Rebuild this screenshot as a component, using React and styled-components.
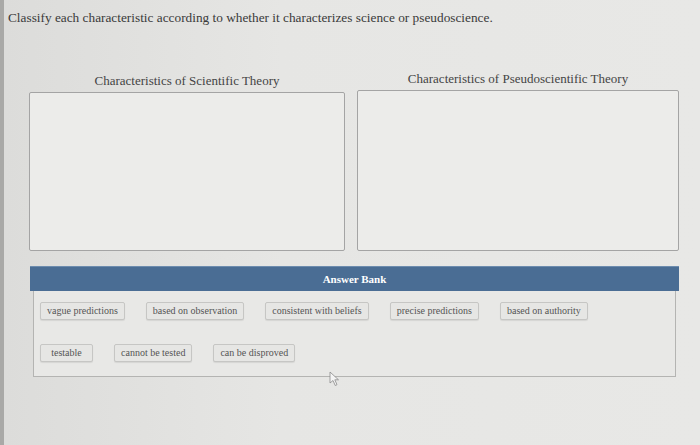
import React from "react";
import styled, { createGlobalStyle } from "styled-components";

const GlobalStyle = createGlobalStyle`
  html, body {
    margin: 0;
    padding: 0;
    background: #e4e4e2;
  }
  body {
    font-family: "Liberation Serif", "Times New Roman", serif;
  }
`;

const Page = styled.div`
  position: relative;
  width: 700px;
  height: 445px;
  box-sizing: border-box;
  border-left: 4px solid #a9a9a7;
  background: linear-gradient(90deg, #dcdcda 0, #e6e6e4 40%, #e8e8e6 100%);
  overflow: hidden;
`;

const Prompt = styled.p`
  margin: 0;
  padding: 10px 0 0 4px;
  font-size: 13.3px;
  color: #3a3a3a;
  line-height: 16px;
`;

const Columns = styled.div`
  display: grid;
  grid-template-columns: 316px 322px;
  column-gap: 12px;
  margin: 47px 0 0 25px;
`;

const Column = styled.div`
  display: flex;
  flex-direction: column;
`;

const ColumnTitle = styled.div`
  text-align: center;
  font-size: 13px;
  color: #444;
  height: 19px;
  line-height: 16px;
  margin-top: ${({ $right }) => ($right ? "-2px" : "0")};
`;

const DropBox = styled.div`
  height: ${({ $right }) => ($right ? "161px" : "159px")};
  box-sizing: border-box;
  border: 1px solid #a4a4a4;
  border-radius: 2px;
  background: #ececea;
`;

const Bank = styled.div`
  margin: 15px 0 0 26px;
  width: 649px;
`;

const BankBar = styled.div`
  height: 25px;
  background: #4a6d94;
  border-top: 1px solid #6d8cae;
  color: #fff;
  font-size: 11px;
  font-weight: bold;
  text-align: center;
  line-height: 25px;
  box-sizing: border-box;
`;

const BankBody = styled.div`
  margin: 0 3px;
  box-sizing: border-box;
  border: 1px solid #b4b4b2;
  border-top: none;
  padding: 11px 0 14px 6px;
  display: flex;
  flex-direction: column;
  gap: 24px;
  background: #e8e8e6;
`;

const TokenRow = styled.div`
  display: flex;
  gap: 21px;
`;

const Token = styled.div`
  height: 18px;
  min-width: 53px;
  box-sizing: border-box;
  padding: 0 6px;
  border: 1px solid #c6c6c4;
  border-radius: 2px;
  background: #e6e6e4;
  box-shadow: 0 1px 1px rgba(0, 0, 0, 0.08);
  font-size: 10px;
  line-height: 16px;
  text-align: center;
  color: #555;
  white-space: nowrap;
`;

const Cursor = styled.svg`
  position: absolute;
  left: 325px;
  top: 371px;
`;

const rows = [
  [
    "vague predictions",
    "based on observation",
    "consistent with beliefs",
    "precise predictions",
    "based on authority",
  ],
  ["testable", "cannot be tested", "can be disproved"],
];

export default function App() {
  return (
    <>
      <GlobalStyle />
      <Page>
        <Prompt>
          Classify each characteristic according to whether it characterizes
          science or pseudoscience.
        </Prompt>
        <Columns>
          <Column>
            <ColumnTitle>Characteristics of Scientific Theory</ColumnTitle>
            <DropBox />
          </Column>
          <Column>
            <ColumnTitle $right>Characteristics of Pseudoscientific Theory</ColumnTitle>
            <DropBox $right />
          </Column>
        </Columns>
        <Bank>
          <BankBar>Answer Bank</BankBar>
          <BankBody>
            {rows.map((row, i) => (
              <TokenRow key={i}>
                {row.map((t) => (
                  <Token key={t}>{t}</Token>
                ))}
              </TokenRow>
            ))}
          </BankBody>
        </Bank>
        <Cursor width="12" height="16" viewBox="0 0 12 16">
          <path
            d="M1 1 L1 12 L4 9.5 L6.2 14.5 L8 13.7 L5.8 8.8 L9.5 8.8 Z"
            fill="#f4f4f4"
            stroke="#8a8a8a"
            strokeWidth="0.8"
          />
        </Cursor>
      </Page>
    </>
  );
}
